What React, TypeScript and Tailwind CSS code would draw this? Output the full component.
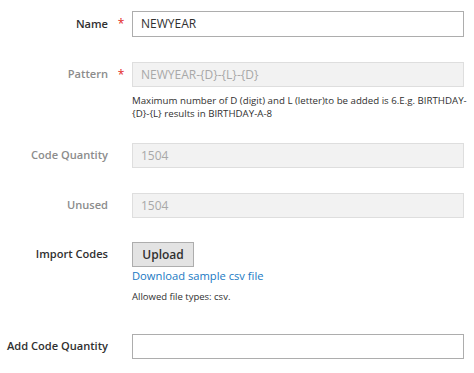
import React from "react";

const font = { fontFamily: '"Open Sans", "Liberation Sans", sans-serif' };

function Label({ text, required, disabled }: { text: string; required?: boolean; disabled?: boolean }) {
  return (
    <div className="flex w-[132px] shrink-0 items-center">
      <div
        className={`w-[108px] whitespace-nowrap text-right text-[11.1px] font-semibold ${disabled ? "text-[#8c8c8c]" : "text-[#303030]"}`}
      >
        {text}
      </div>
      <div className="flex w-[24px] justify-center pl-[2px] text-[12px] text-[#e22626]">{required ? "*" : ""}</div>
    </div>
  );
}

export default function App() {
  return (
    <div className="h-[373px] w-[474px] bg-white" style={font}>
      <div className="flex flex-col pt-[11px] pr-[10px]">
        <div className="flex h-[26px] items-center">
          <Label text="Name" required />
          <div className="flex h-[26px] flex-1 items-center border border-[#adadad] bg-white px-[8px] text-[12px] text-[#303030]">
            NEWYEAR
          </div>
        </div>

        <div className="mt-[25px] flex h-[25px] items-center">
          <Label text="Pattern" required disabled />
          <div className="flex h-[25px] flex-1 items-center border border-[#dedede] bg-[#f2f2f2] px-[8px] text-[12px] text-[#a8a8a8]">
            NEWYEAR-{"{D}"}-{"{L}"}-{"{D}"}
          </div>
        </div>
        <div className="ml-[132px] mt-[7px] whitespace-nowrap text-[9.7px] leading-[13px] text-[#303030]">
          Maximum number of D (digit) and L (letter)to be added is 6.E.g. BIRTHDAY-
          <br />
          {"{D}"}-{"{L}"} results in BIRTHDAY-A-8
        </div>

        <div className="mt-[23px] flex h-[25px] items-center">
          <Label text="Code Quantity" disabled />
          <div className="flex h-[25px] flex-1 items-center border border-[#dedede] bg-[#f2f2f2] px-[8px] text-[12px] text-[#a8a8a8]">
            1504
          </div>
        </div>

        <div className="mt-[25px] flex h-[25px] items-center">
          <Label text="Unused" disabled />
          <div className="flex h-[25px] flex-1 items-center border border-[#dedede] bg-[#f2f2f2] px-[8px] text-[12px] text-[#a8a8a8]">
            1504
          </div>
        </div>

        <div className="mt-[24px] flex h-[25px] items-center">
          <Label text="Import Codes" />
          <div className="flex h-[25px] w-[62px] items-center justify-center border border-[#adadad] bg-[#e3e3e3] text-[12px] font-semibold text-[#303030]">
            Upload
          </div>
        </div>
        <div className="ml-[132px] mt-[1px] text-[11.2px] leading-[16px] text-[#1979c3]">Download sample csv file</div>
        <div className="ml-[132px] mt-[6px] text-[9.5px] leading-[13px] text-[#303030]">Allowed file types: csv.</div>

        <div className="mt-[31px] flex h-[25px] items-center">
          <Label text="Add Code Quantity" />
          <div className="h-[25px] flex-1 border border-[#adadad] bg-white" />
        </div>
      </div>
    </div>
  );
}
